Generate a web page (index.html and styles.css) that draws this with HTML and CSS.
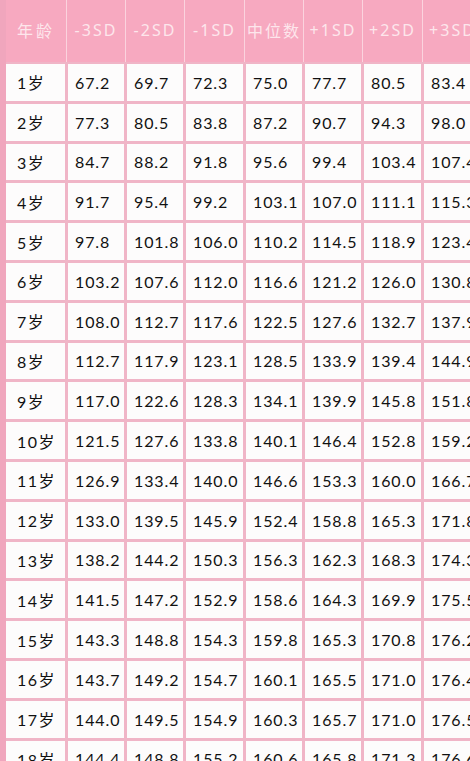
FILE: index.html
```html
<!DOCTYPE html>
<html lang="zh">
<head>
<meta charset="utf-8">
<title>身高标准差表</title>
<link rel="stylesheet" href="styles.css">
</head>
<body>
<div class="sheet">
  <div class="head">
    <div class="hc first">年龄</div>
    <div class="hc">-3SD</div>
    <div class="hc">-2SD</div>
    <div class="hc">-1SD</div>
    <div class="hc">中位数</div>
    <div class="hc">+1SD</div>
    <div class="hc">+2SD</div>
    <div class="hc">+3SD</div>
  </div>
  <div class="grid" id="grid"></div>
</div>
<script src="app.js"></script>
</body>
</html>
```

FILE: app.js
```js
const rows = [
  ["1岁","67.2","69.7","72.3","75.0","77.7","80.5","83.4"],
  ["2岁","77.3","80.5","83.8","87.2","90.7","94.3","98.0"],
  ["3岁","84.7","88.2","91.8","95.6","99.4","103.4","107.4"],
  ["4岁","91.7","95.4","99.2","103.1","107.0","111.1","115.3"],
  ["5岁","97.8","101.8","106.0","110.2","114.5","118.9","123.4"],
  ["6岁","103.2","107.6","112.0","116.6","121.2","126.0","130.8"],
  ["7岁","108.0","112.7","117.6","122.5","127.6","132.7","137.9"],
  ["8岁","112.7","117.9","123.1","128.5","133.9","139.4","144.9"],
  ["9岁","117.0","122.6","128.3","134.1","139.9","145.8","151.8"],
  ["10岁","121.5","127.6","133.8","140.1","146.4","152.8","159.2"],
  ["11岁","126.9","133.4","140.0","146.6","153.3","160.0","166.7"],
  ["12岁","133.0","139.5","145.9","152.4","158.8","165.3","171.8"],
  ["13岁","138.2","144.2","150.3","156.3","162.3","168.3","174.3"],
  ["14岁","141.5","147.2","152.9","158.6","164.3","169.9","175.5"],
  ["15岁","143.3","148.8","154.3","159.8","165.3","170.8","176.2"],
  ["16岁","143.7","149.2","154.7","160.1","165.5","171.0","176.4"],
  ["17岁","144.0","149.5","154.9","160.3","165.7","171.0","176.5"],
  ["18岁","144.4","148.8","155.2","160.6","165.8","171.3","176.6"]
];
const grid = document.getElementById("grid");
rows.forEach(r => {
  r.forEach((v, i) => {
    const d = document.createElement("div");
    d.className = i === 0 ? "c age" : "c";
    d.textContent = v;
    grid.appendChild(d);
  });
});
```

FILE: styles.css
```css
html, body {
  margin: 0;
  padding: 0;
  overflow: hidden;
  background: #f0a6bd;
}
body {
  width: 470px;
  height: 761px;
}
.sheet {
  padding-left: 6px;
  width: 480px;
  background: #f0a6bd;
}
.head {
  display: grid;
  grid-template-columns: 60px 59px 59px 60px 59px 59px 60px 60px;
  height: 62px;
  background: #f7a9c0;
}
.hc {
  display: flex;
  align-items: center;
  justify-content: center;
  border-left: 1px solid #fbd3de;
  color: #fde6ec;
  font-family: "Noto Sans", "Noto Sans CJK SC", sans-serif;
  font-size: 16px;
  letter-spacing: 2px;
  padding-bottom: 2px;
}
.hc.first {
  border-left: none;
  letter-spacing: 3px;
}
.grid {
  display: grid;
  grid-template-columns: 59px 56px 56px 57px 56px 56px 57px 56px;
  grid-auto-rows: 36.8px;
  gap: 3px;
  padding-top: 2px;
  background: #f0b5c7;
}
.c {
  background: #fdfcfc;
  display: flex;
  align-items: center;
  padding-left: 7px;
  color: #111111;
  font-family: "Lato", "Noto Sans CJK SC", sans-serif;
  font-size: 16px;
  letter-spacing: 0.9px;
  white-space: nowrap;
  overflow: hidden;
}
.c.age {
  padding-left: 11px;
  letter-spacing: 1.5px;
}
```
